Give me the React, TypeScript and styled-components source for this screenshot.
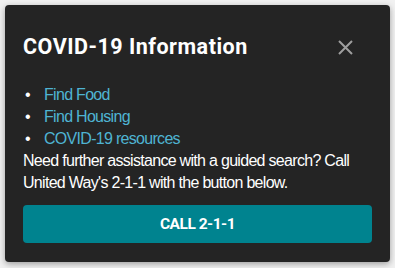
import React from 'react';
import styled, { createGlobalStyle } from 'styled-components';

const GlobalStyle = createGlobalStyle`
  html, body {
    margin: 0;
    padding: 0;
    background: #f1f1f1;
  }
  #root {
    width: 395px;
    height: 268px;
    overflow: hidden;
  }
`;

const Page = styled.div`
  width: 395px;
  height: 268px;
  padding: 5px;
  box-sizing: border-box;
`;

const Dialog = styled.div`
  width: 385px;
  height: 257px;
  box-sizing: border-box;
  background: #242424;
  border-radius: 4px;
  box-shadow: 0 2px 6px rgba(0, 0, 0, 0.35);
  padding: 26px 18px 19px;
  display: flex;
  flex-direction: column;
`;

const Header = styled.div`
  display: flex;
  align-items: center;
  justify-content: space-between;
`;

const Title = styled.h2`
  margin: 0;
  font-family: Roboto, 'Liberation Sans', sans-serif;
  font-weight: 700;
  font-size: 21.5px;
  letter-spacing: 0.5px;
  line-height: 32px;
  color: #ffffff;
`;

const CloseButton = styled.button`
  border: 0;
  background: none;
  padding: 0;
  margin-right: 19px;
  width: 15px;
  height: 15px;
  display: flex;
  cursor: pointer;
`;

const Body = styled.div`
  margin-top: 21px;
  font-family: 'Liberation Sans', Arial, sans-serif;
  font-size: 16px;
  letter-spacing: -0.7px;
  line-height: 22px;
  color: #ffffff;
`;

const LinkList = styled.ul`
  margin: 0;
  padding: 0;
  list-style: none;
`;

const LinkItem = styled.li`
  display: flex;
  &::before {
    content: '•';
    flex: 0 0 19px;
    padding-left: 2px;
    color: #ffffff;
  }
`;

const Link = styled.a`
  color: #4fb4d3;
  text-decoration: none;
`;

const Note = styled.p`
  margin: 0;
`;

const CallButton = styled.button`
  margin-top: 11px;
  height: 38px;
  width: 100%;
  border: 0;
  border-radius: 4px;
  background: #00838f;
  color: #ffffff;
  font-family: Roboto, 'Liberation Sans', sans-serif;
  font-weight: 700;
  font-size: 15.5px;
  letter-spacing: -0.5px;
  text-transform: uppercase;
  cursor: pointer;
`;

const links = ['Find Food', 'Find Housing', 'COVID-19 resources'];

export default function App() {
  return (
    <>
      <GlobalStyle />
      <Page>
        <Dialog>
          <Header>
            <Title>COVID-19 Information</Title>
            <CloseButton aria-label="close">
              <svg width="15" height="15" viewBox="0 0 15 15">
                <path d="M1 1 L14 14 M14 1 L1 14" stroke="#9e9e9e" strokeWidth="2" />
              </svg>
            </CloseButton>
          </Header>
          <Body>
            <LinkList>
              {links.map((l) => (
                <LinkItem key={l}>
                  <Link href="#">{l}</Link>
                </LinkItem>
              ))}
            </LinkList>
            <Note>
              Need further assistance with a guided search? Call United Way's 2-1-1 with the button below.
            </Note>
          </Body>
          <CallButton>Call 2-1-1</CallButton>
        </Dialog>
      </Page>
    </>
  );
}
